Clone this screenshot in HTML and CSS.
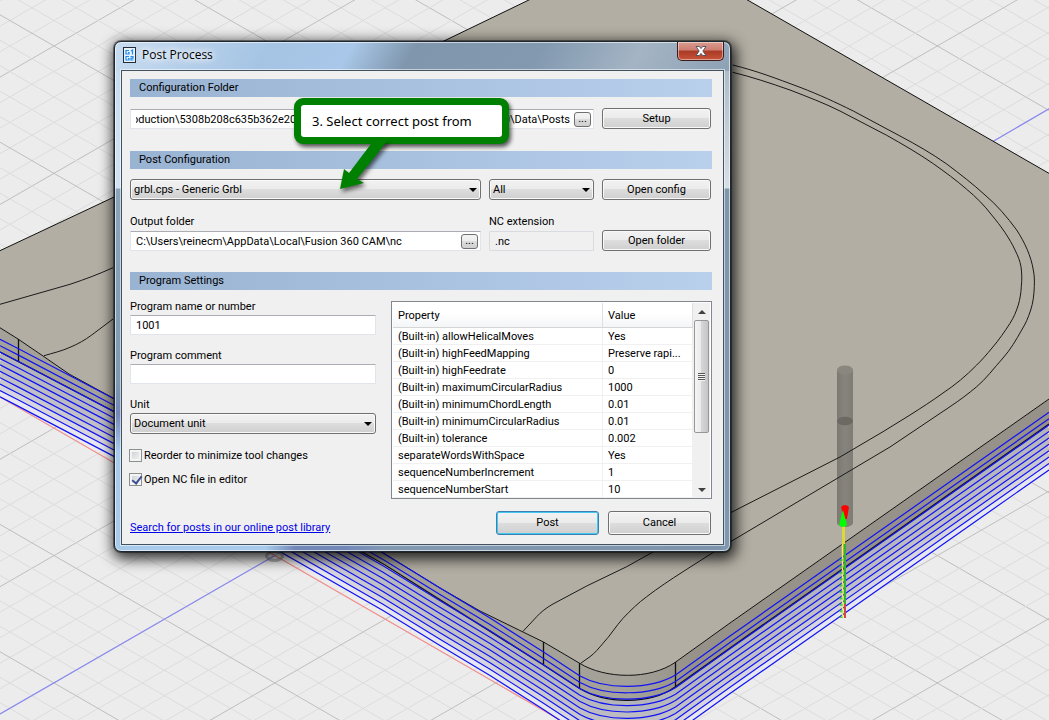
FILE: index.html
```
<!DOCTYPE html>
<html lang="en">
<head>
<meta charset="utf-8">
<title>Post Process</title>
<link rel="stylesheet" href="styles.css">
</head>
<body>
<main class="viewport">
<svg class="model" viewBox="0 0 1049 720" preserveAspectRatio="xMinYMin slice" aria-hidden="true">
  <defs>
    <g id="cell" stroke-width="1">
      <path stroke="#dcdcdc" d="M0 422.500L1100 1057.100M0 448L1100 1082.600M0 473.400L1100 1108M0 498.900L1100 1133.500M0 739.600L1100 105M0 765.100L1100 130.500M0 790.600L1100 156M0 816.100L1100 181.500"/>
      <path stroke="#bebebe" d="M0 397L1100 1031.600M0 714.100L1100 79.500"/>
    </g>
    <linearGradient id="wall" x1="0" y1="0" x2="1049" y2="0" gradientUnits="userSpaceOnUse">
      <stop offset="0" stop-color="#a3a198"/><stop offset=".6" stop-color="#a3a198"/><stop offset=".66" stop-color="#969289"/><stop offset="1" stop-color="#969289"/>
    </linearGradient>
    <linearGradient id="tool" x1="837" y1="0" x2="853" y2="0" gradientUnits="userSpaceOnUse">
      <stop offset="0" stop-color="#7b7972"/><stop offset=".5" stop-color="#86847c"/><stop offset="1" stop-color="#7e7c75"/>
    </linearGradient>
    <path id="pass" d="M0 339.3L18 348.5L113 398.3L383 553L440 588L490 618L543.5 652L580 676C605 690 650 690 675.5 675L730 636L1049 412.3"/>
  </defs>
  <rect width="1049" height="720" fill="#ececec"/>
  <g>
    <use href="#cell" y="-1019.2"/><use href="#cell" y="-891.8"/><use href="#cell" y="-764.4"/><use href="#cell" y="-637"/>
    <use href="#cell" y="-509.6"/><use href="#cell" y="-382.2"/><use href="#cell" y="-254.8"/><use href="#cell" y="-127.4"/>
    <use href="#cell"/><use href="#cell" y="127.4"/><use href="#cell" y="254.8"/><use href="#cell" y="382.2"/><use href="#cell" y="509.6"/>
  </g>
  <path d="M0 713.9L274.8 555.6M993 141.5L1049 108.8" stroke="#8a8af5" stroke-width="1.2"/>
  <g fill="none" stroke-width="6.6">
    <use href="#pass" y="16" stroke="#b4b4bb"/>
    <use href="#pass" y="22.4" stroke="#b7b7be"/>
    <use href="#pass" y="28.8" stroke="#bbbbc1"/>
    <use href="#pass" y="35.2" stroke="#c0c0c6"/>
    <use href="#pass" y="41.6" stroke="#c8c8ce"/>
    <use href="#pass" y="48" stroke="#d6d6dc"/>
    <use href="#pass" y="54.4" stroke="#e7e7f0"/>
  </g>
  <path d="M0 396.9L275 555.6L560 720" fill="none" stroke="#f99090" stroke-width="1.2"/>
  <path fill="url(#wall)" d="M0 327.7L18 339L43 356L69 374L113 398L385 554L440 588L480 611L523 632L543.5 642L579.7 663.3C605 679 650 680 675.3 662.3L730 623L1049 399V424L730 648L675 687C650 705 605 704 579.7 688.5L543.5 665L385 565L113 411L0 352Z"/>
  <path fill="#b2aea3" stroke="#111" stroke-width="1" d="M-2 251.6L112 198L446 40L533 -2H744L1051 174.5V397.6L730 623L675.3 662.3C650 680 605 679 579.7 663.3L543.5 642L523 632L480 611L440 588L385 554L113 398L69 374L43 356L18 339L-2 326.5Z"/>
  <path fill="none" stroke="#111" stroke-width="1.3" d="M0 352L113 411L385 565L543.5 665L579.7 688.5C605 704 650 705 675 687L730 648L1049 424M18.5 339V361M543.5 642V665M579.5 663V688M675.5 662V687"/>
  <g fill="none" stroke="#1212f4" stroke-width="1.2">
    <use href="#pass"/><use href="#pass" y="6.4"/><use href="#pass" y="12.8"/><use href="#pass" y="19.2"/><use href="#pass" y="25.6"/>
    <use href="#pass" y="32"/><use href="#pass" y="38.4"/><use href="#pass" y="44.8"/><use href="#pass" y="51.2"/><use href="#pass" y="57.6"/>
  </g>
  <rect x="837" y="370" width="16" height="153" fill="url(#tool)"/>
  <ellipse cx="845" cy="523" rx="8" ry="4" fill="#807e76"/>
  <ellipse cx="845" cy="370" rx="8" ry="4.5" fill="#89877e"/>
  <ellipse cx="845" cy="421" rx="8" ry="4.3" fill="#6b6962"/>
  <path fill="none" stroke="#1a1a1a" stroke-width="1" d="M732.7 65C757 71 775 78 800 87.3C820 95 835 102 853.3 111L900 136C917 145 931 153 946.7 164C960 174 973 184 985 195C997 205 1007 217 1016.7 230C1025 243 1031 256 1033.3 270C1034.5 276 1034.5 280 1034.3 286.7C1034 295 1033 303 1030.7 310C1028 318 1026 323 1021.7 330C1016 340 1011 349 1003 358C994 368 986 379 976.7 386.7C968 394 960 400 950 406.7L890 447L840 476.7L730 542L712.7 552.7L683 571.7C670 580 658 588 646.7 596.7C638 603 631 610 623 618.3C616 626 610 636 603 643.3C599 648 595 653 590 656.7L580.7 663.3M732.7 72.3C752 77 770 83 790 90C808 97 824 103 840 111L886.7 135.3C902 144 918 153 933.3 163.7C945 172 956 180 966.7 189.3C976 197 984 205 991.7 215C1001 226 1010 239 1015 250C1018 256 1020 261 1021 266.7C1022 274 1022 280 1021.3 286.7C1021 293 1020 299 1018.3 305C1016 312 1014 317 1010 323.3C1005 331 999 340 992 348C987 354 982 360 976.7 365C966 376 955 385 943 393C932 401 921 408 910 415L883 431.7L840 457L730 513L651.7 552.7L626.7 566.7L586.7 586L553 604C546 608 541 612 536.7 616.7L522.7 631.7M0 304.3L70 284.3C86 279 99 274 113 267.7M44 355.7C53 353 62 351 70 347.3C78 344 85 340 91.7 335L113 319"/>
  <path d="M843.5 526V544" stroke="#ddd83a" stroke-width="3"/>
  <path d="M842.5 544V618" stroke="#f0f040" stroke-width="1.5"/>
  <path d="M845 544V604" stroke="#35b035" stroke-width="2"/>
  <path d="M845 604V618" stroke="#d04550" stroke-width="2"/>
  <path d="M841 559V618" stroke="#1fc03a" stroke-width="3" stroke-dasharray="2 4.4" opacity=".75"/>
  <path fill="#f00" d="M841 507Q845 503 849 507L847 519H844Z"/>
  <path fill="#0f0" d="M843 510L839 525Q843 529 847 525Z"/>
  <ellipse cx="274.5" cy="556" rx="8" ry="4.5" fill="none" stroke="#777" stroke-width="3" opacity=".5"/>
</svg>

<section class="dialog" role="dialog" aria-labelledby="title">
  <header class="titlebar">
    <svg class="app-icon" viewBox="0 0 13 16" aria-hidden="true">
      <rect x=".5" y=".5" width="12" height="15" fill="#e6f1fb" stroke="#222c38"/>
      <path fill="none" stroke="#1d8cf0" stroke-width="1.2" d="M6 3.5H3V7H6V5.5H5M8 4L9.5 3V7.5M6 9.5H3V13H6V11.5H5M7.500 9.500H10V11.200H8V13H10.500"/>
    </svg>
    <h1 class="title" id="title">Post Process</h1>
    <button class="close" type="button" aria-label="Close">
      <svg viewBox="0 0 12 10" width="12" height="10" aria-hidden="true"><path d="M1 .5H4.300L6 2.600L7.700 .5H11L7.800 5L11 9.500H7.700L6 7.400L4.300 9.500H1L4.200 5Z" fill="#fff" stroke="#4b4e5c" stroke-width=".9"/></svg>
    </button>
  </header>

  <form class="client">
    <h2 class="bar">Configuration Folder</h2>
    <div class="line line-folder">
      <div class="field wide">
        <input class="path clipped" type="text" aria-label="Configuration folder" value="oduction\5308b208c635b362e208ac84b2e5f90771aa436\61b9ce4\CAM360\Data\Posts">
        <button class="browse" type="button" aria-label="Browse configuration folder">...</button>
      </div>
      <button class="btn" type="button">Setup</button>
    </div>

    <h2 class="bar">Post Configuration</h2>
    <div class="line line-post">
      <span class="combo"><select aria-label="Post"><option>grbl.cps - Generic Grbl</option></select></span>
      <span class="combo"><select aria-label="Filter"><option>All</option></select></span>
      <button class="btn" type="button">Open config</button>
    </div>
    <div class="line line-labels">
      <label for="out">Output folder</label>
      <label for="ext">NC extension</label>
    </div>
    <div class="line line-output">
      <div class="field">
        <input class="path" id="out" type="text" value="C:\Users\reinecm\AppData\Local\Fusion 360 CAM\nc">
        <button class="browse" type="button" aria-label="Browse output folder">...</button>
      </div>
      <div class="field readonly"><input class="path" id="ext" type="text" value=".nc" readonly></div>
      <button class="btn" type="button">Open folder</button>
    </div>

    <h2 class="bar">Program Settings</h2>
    <div class="settings">
      <div class="program">
        <label for="name">Program name or number</label>
        <div class="field"><input class="path" id="name" type="text" value="1001"></div>
        <label for="comment">Program comment</label>
        <div class="field"><input class="path" id="comment" type="text"></div>
        <label for="unit">Unit</label>
        <span class="combo"><select id="unit"><option>Document unit</option></select></span>
        <label class="check"><input type="checkbox">Reorder to minimize tool changes</label>
        <label class="check"><input type="checkbox" checked>Open NC file in editor</label>
      </div>
      <div class="grid-box">
        <table class="props">
          <thead><tr><th class="name">Property</th><th>Value</th></tr></thead>
          <tbody>
            <tr><td>(Built-in) allowHelicalMoves</td><td>Yes</td></tr>
            <tr><td>(Built-in) highFeedMapping</td><td>Preserve rapi...</td></tr>
            <tr><td>(Built-in) highFeedrate</td><td>0</td></tr>
            <tr><td>(Built-in) maximumCircularRadius</td><td>1000</td></tr>
            <tr><td>(Built-in) minimumChordLength</td><td>0.01</td></tr>
            <tr><td>(Built-in) minimumCircularRadius</td><td>0.01</td></tr>
            <tr><td>(Built-in) tolerance</td><td>0.002</td></tr>
            <tr><td>separateWordsWithSpace</td><td>Yes</td></tr>
            <tr><td>sequenceNumberIncrement</td><td>1</td></tr>
            <tr><td>sequenceNumberStart</td><td>10</td></tr>
          </tbody>
        </table>
        <div class="scroll" aria-hidden="true">
          <span class="arrow up"></span>
          <span class="thumb"><i class="grip"></i></span>
          <span class="arrow down"></span>
        </div>
      </div>
    </div>
    <footer class="actions">
      <a class="link" href="#">Search for posts in our online post library</a>
      <button class="btn big default" type="submit">Post</button>
      <button class="btn big" type="button">Cancel</button>
    </footer>
  </form>

  <aside class="callout">
    <svg class="pointer" viewBox="0 0 56 56" aria-hidden="true"><path fill="#008000" d="M37 0H51L20 39L27 43L3 49L7 29L12 33Z"/></svg>
    <p class="callout-text">3. Select correct post from</p>
  </aside>
</section>
</main>
</body>
</html>
```
FILE: styles.css
```
* { box-sizing: border-box; }
body { margin: 0; }
body, button, input, select { font: 11px/14px Roboto, "DejaVu Sans Condensed", sans-serif; color: #000; }
h1, h2, p { margin: 0; font-weight: normal; }

.viewport { position: relative; min-height: 100vh; overflow: hidden; background: #ececec; }
.model { position: absolute; inset: 0; width: 100%; height: 100%; }

.dialog {
  position: absolute; left: 114px; top: 41px; width: 617px;
  padding: 0 6px 6px;
  border: 1px solid #1c2630; border-radius: 7px;
  background:
    linear-gradient(120deg, #c8dcf0 0, #a5c4e4 25%, #a9c7e8 38%, #7f96ad 48%, #8299b0 68%, #a4b4c4 84%, #8da1b5 100%) top / 100% 29px no-repeat,
    linear-gradient(#c6dbef 0, #d2e2f2 146px, #8ba4ba 147px, #7e99b0 340px, #7486b8 372px, #a8cbec 410px) left / 8px 100% no-repeat,
    linear-gradient(#a4b4c4 0, #d6dee6 146px, #7d97ac 147px, #8097b0) right / 8px 100% no-repeat,
    linear-gradient(90deg, #a8cbec 0, #a8cbec 150px, #7488b8 180px, #7488b8 230px, #8299b2 270px, #7c93ab) bottom / 100% 8px no-repeat,
    #a8c4e0;
  box-shadow: inset 0 0 0 1px rgba(255,255,255,.6), 0 0 0 1px rgba(0,0,0,.4), 2px 4px 14px 3px rgba(0,0,0,.8);
}
.titlebar { display: flex; align-items: flex-start; height: 28px; padding: 0 0 0 2px; }
.app-icon { width: 13px; height: 16px; margin-top: 5px; }
.title { flex: 1; margin: 5px 0 0 6px; font-size: 12px; line-height: 16px; font-family: "Open Sans", sans-serif; text-shadow: 0 0 6px #fff, 0 0 8px #fff, 0 0 12px #fff; }
.close {
  display: flex; align-items: center; justify-content: center; width: 47px; height: 19px; padding: 0;
  border: 1px solid #3c1b1a; border-top: 0; border-radius: 0 0 5px 5px;
  background: linear-gradient(#d99b90 0, #cd7d70 45%, #a93a26 50%, #c8543a 100%);
  box-shadow: inset 0 0 0 1px rgba(255,255,255,.45);
}
.client { padding: 8px 12px 9px 8px; border: 1px solid #43525f; background: #f0f0f0; box-shadow: 0 0 0 1px rgba(255,255,255,.55); }

.bar { height: 18px; padding-left: 9px; margin-right: -1px; font-size: 11px; line-height: 18px; background: linear-gradient(90deg, #99b3d2, #b8d0ec); }
.line { display: grid; grid-template-columns: 351fr 105fr 109fr; gap: 8px; align-items: end; }
.wide { grid-column: span 2; }
.line-folder { margin: 11px 0 22px; }
.line-post { margin-top: 10px; }
.line-labels { margin-top: 15px; }
.line-output { margin: 1px 0 21px; }

.field { display: flex; align-items: center; height: 20px; padding: 0 2px 0 0; border: 1px solid #e1e4ea; border-top-color: #abadb3; border-radius: 1px; background: #fff; }
.readonly { background: #f0f0f0; border-color: #d9dbe0; }
.path { flex: 1; min-width: 0; width: 100%; height: 18px; padding: 0; margin-left: 5px; border: 0; outline: 0; background: transparent; }
.clipped { text-indent: -4px; }
.browse { width: 17px; height: 15px; padding: 0; border: 1px solid #707070; border-radius: 3px; line-height: 12px; background: linear-gradient(#f4f4f4, #ececec 48%, #ddd 50%, #cfcfcf); }

.btn { height: 21px; padding: 0; border: 1px solid #707070; border-radius: 3px; background: linear-gradient(#f2f2f2, #ebebeb 48%, #dddddd 50%, #cfcfcf); box-shadow: inset 0 0 0 1px #f9f9f9; }
.combo { position: relative; display: block; }
.combo select { display: block; width: 100%; height: 21px; padding: 0 18px 0 3px; border: 1px solid #707070; border-radius: 3px; appearance: none; background: linear-gradient(#f2f2f2, #ebebeb 48%, #dddddd 50%, #cfcfcf); box-shadow: inset 0 0 0 1px #f9f9f9; }
.combo::after { content: ""; position: absolute; right: 4px; top: 9px; border: 4px solid transparent; border-top-color: #000; border-bottom: 0; }

.settings { display: grid; grid-template-columns: 246px 1fr; gap: 15px; margin: 9px -1px 0 0; padding-top: 2px; }
.program { display: flex; flex-direction: column; margin-top: -1px; }
.program label { line-height: 14px; }
.program .field { margin: 1px 0 14px; }
.program .combo { margin: 1px 0 14px; }
.program .check { display: flex; align-items: center; gap: 2px; height: 15px; margin-bottom: 9px; }
.check input { appearance: none; width: 13px; height: 13px; margin: 0 0 0 -1px; border: 1px solid #8e8f8f; background: linear-gradient(135deg, #c9cdd2, #f6f6f6); box-shadow: inset 0 0 0 2px #f4f4f4; }
.check input:checked::after { content: ""; display: block; width: 4px; height: 8px; margin: 0 0 0 4px; border: solid #3b4f92; border-width: 0 2px 2px 0; transform: rotate(38deg); }

.grid-box { display: flex; height: 198px; padding: 1px 1px 0 1px; border: 1px solid #828790; background: #fff; }
.props { flex: 1; table-layout: fixed; border-collapse: separate; border-spacing: 0; align-self: flex-start; }
.props th { height: 25px; padding: 1px 5px 0; text-align: left; font-weight: normal; border-right: 1px solid #dedfe1; border-bottom: 1px solid #d5d5d5; background: linear-gradient(#fff 45%, #f4f5f7); }
.props .name { width: 210px; }
.props td { height: 17px; padding: 1px 5px 0; line-height: 15px; white-space: nowrap; border-right: 1px solid #f0f0f0; border-bottom: 1px solid #f0f0f0; }
.scroll { display: flex; flex-direction: column; width: 17px; background: #f0f0f0; }
.arrow { height: 17px; display: flex; align-items: center; justify-content: center; }
.arrow::before { content: ""; border: 4px solid transparent; }
.up::before { border-top: 0; border-bottom-color: #404040; }
.down { margin-top: auto; }
.down::before { border-bottom: 0; border-top-color: #404040; }
.thumb { display: flex; align-items: center; justify-content: center; height: 113px; margin: 0 1px; border: 1px solid #979797; border-radius: 2px; background: linear-gradient(90deg, #f5f5f5, #e9e9eb 48%, #d6d6d8 50%, #c4c4c8); }
.grip { width: 7px; height: 8px; background: repeating-linear-gradient(#555 0 1px, #f4f4f4 1px 2px); }

.actions { display: flex; align-items: flex-end; gap: 9px; margin-top: 12px; }
.link { flex: 1; color: #0000e8; }
.big { width: 103px; height: 24px; }
.default { border-color: #3c7fb1; box-shadow: inset 0 0 0 1px #45c8f0; }

.callout { position: absolute; left: 179px; top: 56px; width: 215px; padding: 10px 12px; border: 6px solid #008000; border-radius: 9px; background: #fff; box-shadow: 2px 3px 4px rgba(0,0,0,.65); }
.callout::before { content: ""; position: absolute; inset: -1px; border: 2px solid #008000; border-radius: 5px; }
.callout-text { font: 13px/14px "Noto Sans", sans-serif; white-space: nowrap; }
.pointer { position: absolute; left: 37px; top: 36px; width: 56px; height: 56px; filter: drop-shadow(2px 3px 2px rgba(0,0,0,.6)); }
```
